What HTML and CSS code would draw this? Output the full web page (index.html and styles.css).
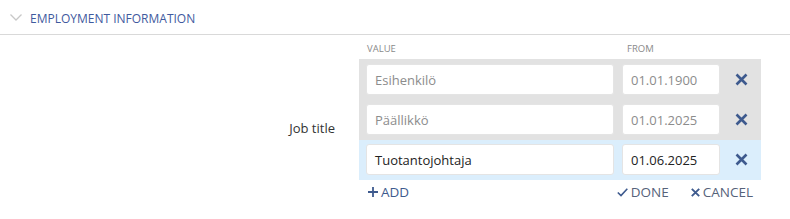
FILE: index.html
```html
<!DOCTYPE html>
<html>
<head>
<meta charset="utf-8">
<link rel="stylesheet" href="styles.css">
</head>
<body>
<div class="section-head">
  <svg class="chev" width="12" height="7" viewBox="0 0 12 7"><path d="M0.5 0.5 L6 6 L11.5 0.5" fill="none" stroke="#c8c8c8" stroke-width="1.3"/></svg>
  <span class="section-title">EMPLOYMENT INFORMATION</span>
</div>
<div class="field">
  <div class="field-label">Job title</div>
  <div class="field-body">
    <div class="col-heads">
      <span class="ch-value">VALUE</span>
      <span class="ch-from">FROM</span>
    </div>
    <div class="rows">
      <div class="row old">
        <div class="inp val muted">Esihenkilö</div>
        <div class="inp date muted">01.01.1900</div>
        <div class="del"><svg width="13" height="13" viewBox="0 0 13 13"><path d="M1.5 1.5 L11.5 11.5 M11.5 1.5 L1.5 11.5" stroke="#3e5a8e" stroke-width="2.6" stroke-linecap="butt"/></svg></div>
      </div>
      <div class="row old">
        <div class="inp val muted">Päällikkö</div>
        <div class="inp date muted">01.01.2025</div>
        <div class="del"><svg width="13" height="13" viewBox="0 0 13 13"><path d="M1.5 1.5 L11.5 11.5 M11.5 1.5 L1.5 11.5" stroke="#3e5a8e" stroke-width="2.6" stroke-linecap="butt"/></svg></div>
      </div>
      <div class="row cur">
        <div class="inp val">Tuotantojohtaja</div>
        <div class="inp date">01.06.2025</div>
        <div class="del"><svg width="13" height="13" viewBox="0 0 13 13"><path d="M1.5 1.5 L11.5 11.5 M11.5 1.5 L1.5 11.5" stroke="#3e5a8e" stroke-width="2.6" stroke-linecap="butt"/></svg></div>
      </div>
    </div>
    <div class="actions">
      <span class="btn add"><svg width="10" height="10" viewBox="0 0 10 10"><path d="M5 0 V10 M0 5 H10" stroke="#3e5a8e" stroke-width="1.8"/></svg>ADD</span>
      <span class="spacer"></span>
      <span class="btn done"><svg width="11" height="9" viewBox="0 0 11 9"><path d="M0.8 4.5 L4 7.6 L10.3 0.8" fill="none" stroke="#3e5a8e" stroke-width="1.6"/></svg>DONE</span>
      <span class="btn cancel"><svg width="9" height="9" viewBox="0 0 9 9"><path d="M0.8 0.8 L8.2 8.2 M8.2 0.8 L0.8 8.2" stroke="#3e5a8e" stroke-width="1.9"/></svg>CANCEL</span>
    </div>
  </div>
</div>
</body>
</html>
```

FILE: styles.css
```css
html, body {
  margin: 0;
  padding: 0;
  background: #ffffff;
  font-family: "Open Sans", "Noto Sans", sans-serif;
}

.section-head {
  display: flex;
  align-items: center;
  border-bottom: 1px solid #d9d9d9;
  padding-left: 10px;
  box-sizing: border-box;
  height: 35px;
}

.chev {
  margin-top: 1px;
  margin-right: 8px;
}

.section-title {
  font-size: 12px;
  color: #3f5a9e;
  margin-top: 2px;
}

.field {
  display: flex;
}

.field-label {
  width: 335px;
  text-align: right;
  font-size: 13px;
  color: #333;
  padding-top: 84px;
  box-sizing: border-box;
}

.field-body {
  margin-left: 24px;
  width: 402px;
}

.col-heads {
  display: flex;
  height: 24px;
  align-items: flex-end;
  padding-bottom: 4px;
  box-sizing: border-box;
  font-size: 9.5px;
  color: #8a8a8a;
}

.ch-value {
  margin-left: 8px;
  width: 260px;
}

.rows {
  display: flex;
  flex-direction: column;
}

.row {
  display: flex;
  align-items: center;
  padding: 5px 0 5px 7px;
}

.row.old { background: #e2e2e2; }
.row.cur { background: #dbeefc; }
.row + .row { padding-top: 4px; }

.inp {
  background: #fff;
  border: 1px solid #e4e4e4;
  border-radius: 3px;
  height: 31px;
  box-sizing: border-box;
  font-size: 13px;
  color: #222;
  padding-left: 8px;
  display: flex;
  align-items: center;
}

.inp.muted { color: #8c8c8c; }
.inp.val { width: 248px; }
.inp.date { width: 98px; margin-left: 8px; }

.del {
  flex: 1;
  display: flex;
  justify-content: center;
  padding-left: 1px;
}

.actions {
  display: flex;
  align-items: center;
  height: 24px;
  padding: 0 8px 0 9px;
  font-size: 13.5px;
  color: #56627a;
}

.spacer { flex: 1; }

.btn {
  display: inline-flex;
  align-items: center;
  gap: 3px;
}

.btn.add { color: #3e5a8e; }
.btn.cancel { margin-left: 22px; }
```
